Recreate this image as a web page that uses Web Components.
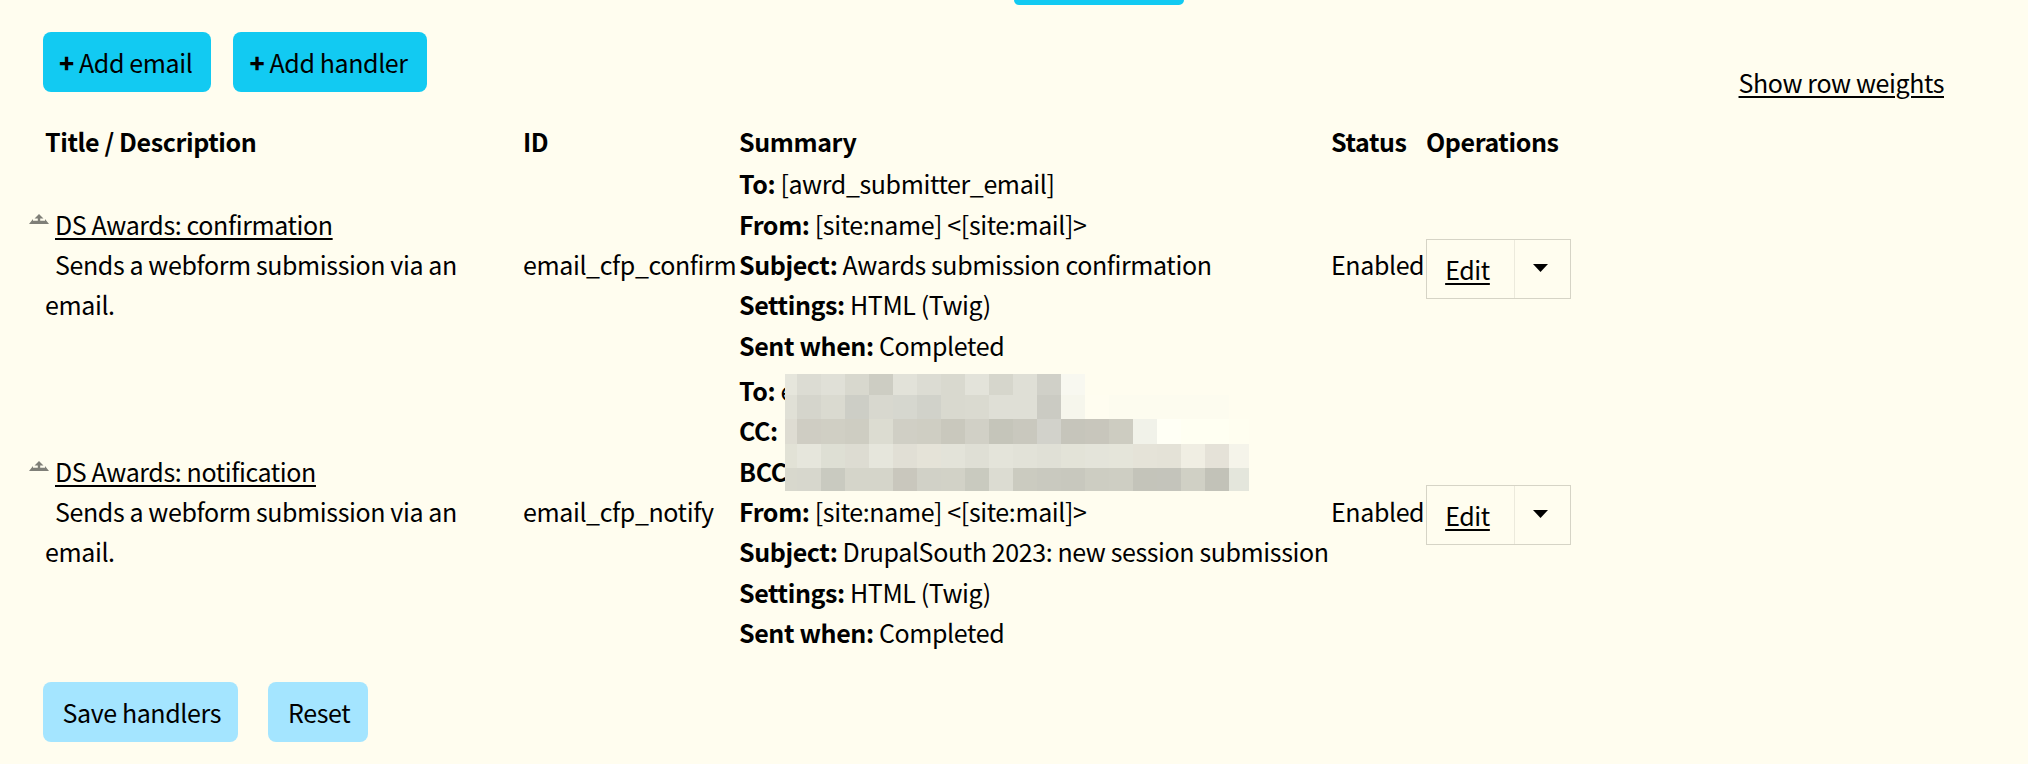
<!DOCTYPE html>
<html lang="en"><head><meta charset="utf-8"><title>Handlers</title>
<style>
html,body{margin:0;padding:0;height:100%;background:#fffdef;overflow:hidden}
body{font-family:"Noto Sans CJK SC","Source Sans Pro","Noto Sans",sans-serif;font-size:25px;letter-spacing:-.39px;line-height:40.4px;color:#000}
b{font-weight:900}
</style></head><body>
<handler-page>
  <ds-button slot="stub" kind="stub"></ds-button>
  <ds-button slot="actions" kind="primary" pl="16" pr="19"><b>+</b> Add email</ds-button>
  <ds-button slot="actions" kind="primary" pl="16" pr="19"><b>+</b> Add handler</ds-button>
  <ds-link slot="weights">Show row weights</ds-link>

  <handler-row slot="rows" header>
    <span slot="title">Title / Description</span>
    <span slot="id">ID</span>
    <span slot="summary">Summary</span>
    <span slot="status">Status</span>
    <span slot="ops">Operations</span>
  </handler-row>

  <handler-row slot="rows">
    <handler-title slot="title" name="DS Awards: confirmation">Sends a webform submission via an email.</handler-title>
    <span slot="id">email_cfp_confirm</span>
    <div slot="summary">
      <sum-line label="To:">[awrd_submitter_email]</sum-line>
      <sum-line label="From:">[site:name] &lt;[site:mail]&gt;</sum-line>
      <sum-line label="Subject:">Awards submission confirmation</sum-line>
      <sum-line label="Settings:">HTML (Twig)</sum-line>
      <sum-line label="Sent when:">Completed</sum-line>
    </div>
    <span slot="status">Enabled</span>
    <drop-button slot="ops">Edit</drop-button>
  </handler-row>

  <handler-row slot="rows">
    <handler-title slot="title" name="DS Awards: notification">Sends a webform submission via an email.</handler-title>
    <span slot="id">email_cfp_notify</span>
    <div slot="summary">
      <sum-line label="To:">e</sum-line>
      <sum-line label="CC:"></sum-line>
      <sum-line label="BCC:"></sum-line>
      <sum-line label="From:">[site:name] &lt;[site:mail]&gt;</sum-line>
      <sum-line label="Subject:">DrupalSouth 2023: new session submission</sum-line>
      <sum-line label="Settings:">HTML (Twig)</sum-line>
      <sum-line label="Sent when:">Completed</sum-line>
      <pixel-mosaic></pixel-mosaic>
    </div>
    <span slot="status">Enabled</span>
    <drop-button slot="ops" class="second">Edit</drop-button>
  </handler-row>

  <ds-button slot="footer" kind="soft" pl="19.5" pr="17">Save handlers</ds-button>
  <ds-button slot="footer" kind="soft" pl="20" pr="18">Reset</ds-button>
</handler-page>

<script>
function def(name, css, html, init){
  customElements.define(name, class extends HTMLElement{
    constructor(){super();const r=this.attachShadow({mode:'open'});r.innerHTML='<style>'+css+'</style>'+html;}
    connectedCallback(){ if(init) init.call(this,this.shadowRoot); }
  });
}
def('handler-page',
 `:host{display:block}
  .stub{display:flex;padding-left:1014px}
  .bar{display:flex;align-items:flex-start;justify-content:space-between;padding:27px 84px 0 43px}
  .left{display:flex;gap:22px}
  .right{padding-top:30px}
  .rows{display:block;margin-top:18.5px}
  .foot{display:flex;gap:30px;padding:27px 0 0 43px}`,
 `<div class="stub"><slot name="stub"></slot></div>
  <div class="bar"><div class="left"><slot name="actions"></slot></div><div class="right"><slot name="weights"></slot></div></div>
  <div class="rows"><slot name="rows"></slot></div>
  <div class="foot"><slot name="footer"></slot></div>`);
def('ds-button',
 `:host{display:inline-flex;align-items:center;height:60px;box-sizing:border-box;border-radius:8px;white-space:nowrap}
  :host([kind=primary]){background:#12caf2}
  :host([kind=soft]){background:#a4e5ff}
  :host([kind=stub]){background:#12caf2;width:170px;height:5px;border-radius:0 0 8px 8px}`,
 `<span><slot></slot></span>`,
 function(){const l=this.getAttribute('pl'),r=this.getAttribute('pr'); if(l){this.style.paddingLeft=l+'px';this.style.paddingRight=r+'px';}});
def('ds-link',
 `:host{display:inline-block;white-space:nowrap;text-decoration:underline;text-decoration-thickness:2px;text-underline-offset:3px}`,
 `<slot></slot>`);
def('handler-row',
 `:host{display:grid;grid-template-columns:478px 216px 592px 95px 145px;padding-left:45px;align-items:center;white-space:nowrap}
  :host([header]){font-weight:700;height:40px}
  :host(:not([header])) .s{padding:2.3px 0}
  .s{position:relative}`,
 `<div class="t"><slot name="title"></slot></div><div><slot name="id"></slot></div><div class="s"><slot name="summary"></slot></div><div><slot name="status"></slot></div><div><slot name="ops"></slot></div>`);
def('handler-title',
 `:host{display:block;white-space:normal;width:440px}
  svg{display:inline-block;width:20px;height:10px;margin:0 6px 0 -16px;vertical-align:10.5px}
  a{color:inherit;text-decoration:underline;text-decoration-thickness:2px;text-underline-offset:3px}
  .d{text-indent:10px}`,
 `<div><svg viewBox="0 0 20 10" aria-hidden="true"><path fill="#7f7f78" d="M10 0L14.5 4.5H11.2V6.8H16V5L20 10H0L4 5V6.8H8.8V4.5H5.5Z"/></svg><a id="n" href="#"></a></div><div class="d"><slot></slot></div>`,
 function(r){r.getElementById('n').textContent=this.getAttribute('name');});
def('sum-line',
 `:host{display:block;white-space:nowrap}
  b{font-weight:700}`,
 `<b id="l"></b> <slot></slot>`,
 function(r){r.getElementById('l').textContent=this.getAttribute('label');});
def('drop-button',
 `:host{display:inline-flex;box-sizing:border-box;width:145px;height:60px;margin-top:9px;border:1.5px solid #d6d4c6}
  :host(.second){margin-top:7px}
  a{display:flex;align-items:center;justify-content:center;width:88px;box-sizing:border-box;color:inherit;border-right:1.5px solid #eceadc;text-decoration:underline;text-decoration-thickness:2px;text-underline-offset:3px;padding:0 6px 0 0}
  .c{flex:1;display:flex;align-items:center;justify-content:center;padding-right:4px}
  svg{width:15px;height:8px;margin-top:-2px}`,
 `<a href="#"><slot></slot></a><div class="c"><svg viewBox="0 0 15 8" aria-hidden="true"><path d="M0 0H15L7.5 8Z" fill="#000"/></svg></div>`);
def('pixel-mosaic',
 `:host{position:absolute;left:46px;top:6.3px;display:grid;grid-template-columns:12px repeat(18,24px) 20px;grid-template-rows:21px 24px 25px 24px 23px}`,
 ``,
 function(r){
  const rows=[
  'e6e6dc dcdcd3 e0e0d7 d8d8ce cdcdc3 e2e2d9 dcdcd3 d9d9cf e3e3da d6d6cc dfdfd6 d0d0c8 f8f8f0 fffdef fffdef fffdef fffdef fffdef fffdef fffdef',
  'e0e0d6 d5d5cc dadad0 cdcec6 d8d8cf d6d7cf d1d2ca d9d9cf dadad0 dfdfd6 dfdfd6 cbcbc3 f6f6ec fffdf0 fdfcef fdfcef fdfcef fdfcef fdfcef fffdef',
  'dedcd2 cfcdc3 d0cfc4 cecdc2 dcdcd1 d0cfc5 cfcec3 c9c8bd d1d0c6 c5c5ba c9c8be d2d2cb c6c5bb c8c6bc cdccc1 f1f2e9 fffff5 fffff2 fffff2 fffef0',
  'e2e2d6 e6e6dc dedfd4 dddcd2 e6e6dc e1dfd5 e5e3d8 e3e3d9 dfdfd5 e4e4da e2e2d8 e0e0d6 e3e3d8 e4e4da e5e5da e5e3d8 e4e2d7 f0eee3 e5e2d8 f5f4ea',
  'd8d8cd d7d7cd c9cac0 d5d5ca d5d5ca c9c7bd d1d1c7 d2d2c7 c9cabf dcdcd2 cbcbc0 c9c9bf c8c8be cdcdc2 cecec3 c4c4ba c4c4bb d0d0c5 c2c2b8 e4e6dc'];
  rows.forEach(row=>row.split(' ').forEach(c=>{const d=document.createElement('div');d.style.background='#'+c;r.appendChild(d);}));
 });
</script>
</body></html>
